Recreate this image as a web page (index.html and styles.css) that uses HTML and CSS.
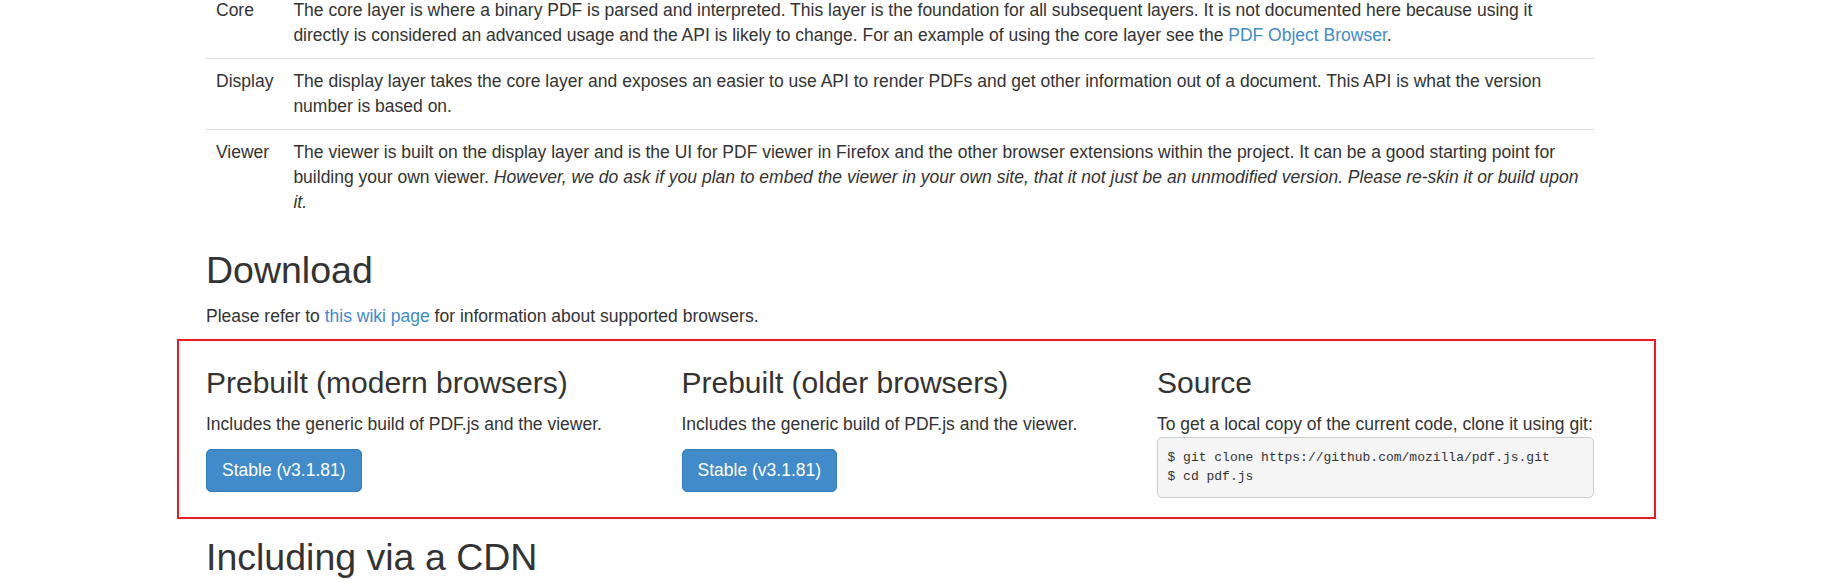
FILE: index.html
```html
<!DOCTYPE html>
<html lang="en">
<head>
<meta charset="utf-8">
<title>PDF.js - Getting Started</title>
<link rel="stylesheet" href="styles.css">
</head>
<body>
<div class="container">
  <table class="layers">
    <tbody>
      <tr>
        <td class="name">Core</td>
        <td>The core layer is where a binary PDF is parsed and interpreted. This layer is the foundation for all subsequent layers. It is not documented here because using it directly is considered an advanced usage and the API is likely to change. For an example of using the core layer see the <a href="#">PDF Object Browser</a>.</td>
      </tr>
      <tr>
        <td class="name">Display</td>
        <td>The display layer takes the core layer and exposes an easier to use API to render PDFs and get other information out of a document. This API is what the version number is based on.</td>
      </tr>
      <tr>
        <td class="name">Viewer</td>
        <td>The viewer is built on the display layer and is the UI for PDF viewer in Firefox and the other browser extensions within the project. It can be a good starting point for building your own viewer. <em>However, we do ask if you plan to embed the viewer in your own site, that it not just be an unmodified version. Please re-skin it or build upon it.</em></td>
      </tr>
    </tbody>
  </table>

  <h2 class="h2">Download</h2>
  <p class="intro">Please refer to <a href="#">this wiki page</a> for information about supported browsers.</p>

  <div class="highlight">
    <div class="cols">
      <div class="col">
        <h3 class="h3">Prebuilt (modern browsers)</h3>
        <p class="text">Includes the generic build of PDF.js and the viewer.</p>
        <a class="btn" href="#">Stable (v3.1.81)</a>
      </div>
      <div class="col">
        <h3 class="h3">Prebuilt (older browsers)</h3>
        <p class="text">Includes the generic build of PDF.js and the viewer.</p>
        <a class="btn" href="#">Stable (v3.1.81)</a>
      </div>
      <div class="col">
        <h3 class="h3">Source</h3>
        <p class="text tight">To get a local copy of the current code, clone it using git:</p>
        <pre class="code">$ git clone https://github.com/mozilla/pdf.js.git
$ cd pdf.js</pre>
      </div>
    </div>
  </div>

  <h2 class="h2 after">Including via a CDN</h2>
</div>
</body>
</html>
```

FILE: styles.css
```css
html, body {
  margin: 0;
  padding: 0;
  background: #fff;
}

body {
  font-family: "Liberation Sans", Arial, Helvetica, sans-serif;
  font-size: 17.5px;
  line-height: 25px;
  color: #333;
}

a {
  color: #428bca;
  text-decoration: none;
}

.container {
  width: 1387.5px;
  margin: -13px 0 0 206px;
}

.layers {
  width: 100%;
  border-collapse: collapse;
  border-spacing: 0;
  margin-bottom: 25px;
}

.layers td {
  padding: 10px;
  border-top: 1px solid #ddd;
  vertical-align: top;
  text-align: left;
}

.layers td.name {
  white-space: nowrap;
}

.h2 {
  font-size: 37.5px;
  line-height: 41.25px;
  font-weight: 400;
  margin: 25px 0 12.5px;
}

.h2.after {
  margin-top: 18px;
}

.intro {
  margin: 0 0 10.5px;
}

.highlight {
  border: 2px solid #ed1c24;
  margin-left: -29px;
  padding: 0 0 19px 27px;
  box-sizing: border-box;
  width: 1479px;
}

.cols {
  display: grid;
  grid-template-columns: 475.5px 475.5px 436.5px;
}

.col {
  display: flex;
  flex-direction: column;
  align-items: flex-start;
}

.h3 {
  font-size: 30px;
  line-height: 33px;
  font-weight: 400;
  margin: 25px 0 12.5px;
}

.text {
  margin: 0 0 12.5px;
}

.text.tight {
  margin-bottom: 0;
}

.btn {
  display: block;
  background: #428bca;
  border: 1px solid #357ebd;
  color: #fff;
  border-radius: 5px;
  padding: 7.75px 15px;
  font-size: 17.5px;
  line-height: 25px;
}

.code {
  align-self: stretch;
  margin: 0;
  padding: 10.5px 9.5px;
  background: #f5f5f5;
  border: 1px solid #ccc;
  border-radius: 5px;
  font-family: "Liberation Mono", "Courier New", monospace;
  font-size: 13px;
  line-height: 19px;
  color: #333;
}
```
